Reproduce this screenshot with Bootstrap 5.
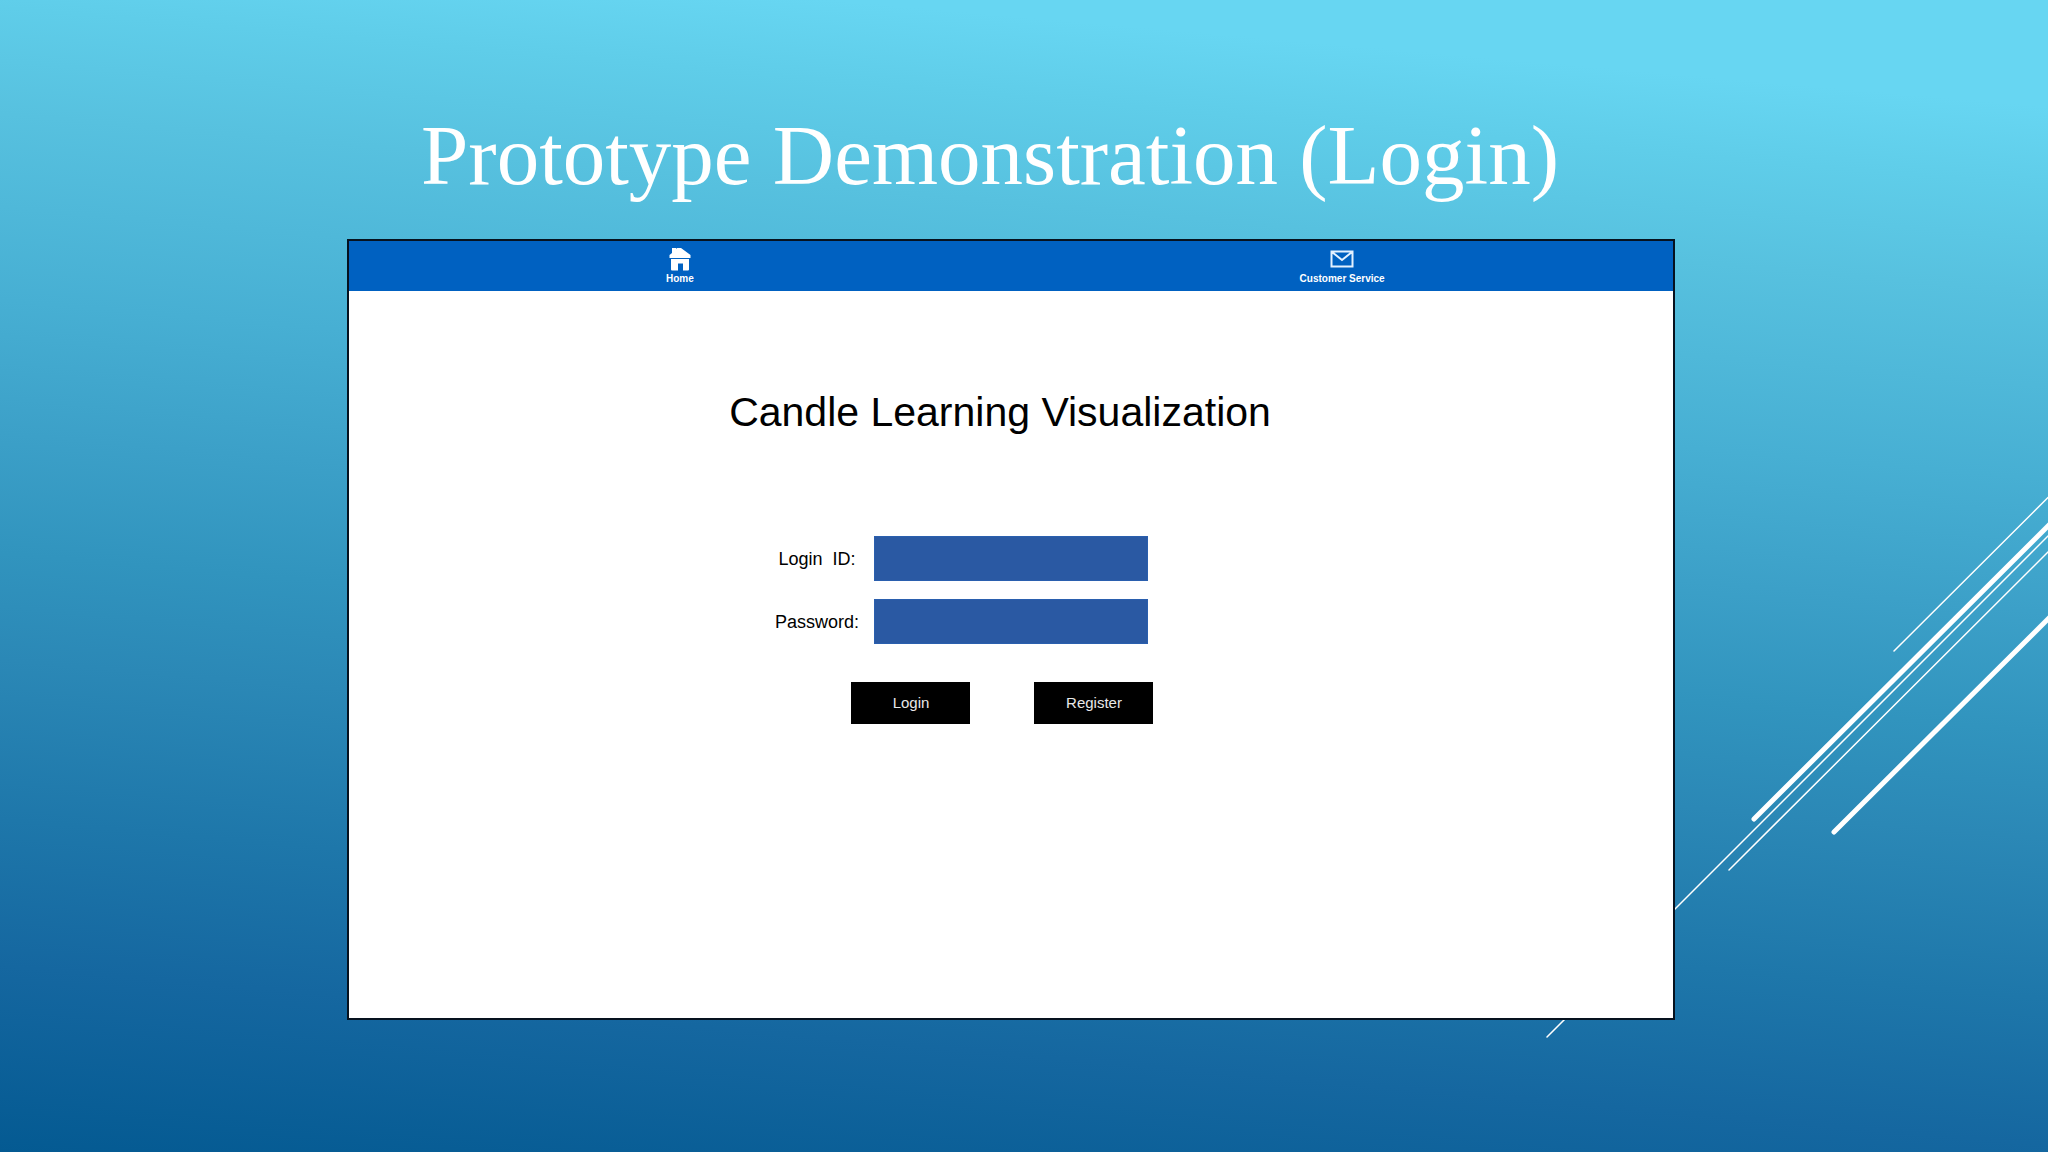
<!DOCTYPE html>
<html lang="en">
<head>
<meta charset="utf-8">
<meta name="viewport" content="width=device-width, initial-scale=1">
<title>Prototype Demonstration (Login)</title>
<link href="https://cdn.jsdelivr.net/npm/bootstrap@5.3.0/dist/css/bootstrap.min.css" rel="stylesheet">
<style>
  body {
    font-family: "Liberation Sans", Arial, sans-serif;
    color: #000;
    background: #2f8ebb;
  }
  .slide {
    min-height: 100vh;
    background: linear-gradient(185deg, #67d6f2 8%, #5fcde9 14%, #57c1df 22%, #47afd3 36%, #3ca0c8 46%, #3194be 55%, #2b88b6 63%, #1e77aa 75%, #1567a0 86%, #045a92 100%);
  }
  .streaks { stroke: #fff; stroke-linecap: round; z-index: 0; }
  .slide-body { padding: 105px 26px 0 0; z-index: 1; }
  .slide-title {
    font: 400 85px/100px "Liberation Serif", "Times New Roman", serif;
    padding-right: 42px;
    margin-bottom: 34px;
  }
  .prototype {
    width: 65.7%;
    min-height: 781px;
    border: 2px solid #06121f;
  }
  .topbar { background: #0061c1; height: 50px; }
  .topbar a { font-size: 10px; line-height: 12px; padding-top: 6px; }
  .topbar svg { display: block; margin: 0 auto 2px; }
  .app-title { font-size: 41px; line-height: 48px; margin: 97px 0 100px; padding-right: 22px; }
  .login-grid { row-gap: 18px; }
  .field-line { gap: 12px; padding-right: 102px; }
  .field-line label { width: 90px; font-size: 18px; line-height: 24px; white-space: pre; text-align: center; }
  .field-line input {
    width: 274px; height: 45px;
    background: #2a59a3; border: 1px solid #2a5fae; border-radius: 0; color: #fff;
  }
  .actions { gap: 64px; margin-top: 38px; padding-right: 17px; }
  .actions .btn { width: 119px; height: 42px; font-size: 15px; line-height: 20px; background: #000; color: #e8e8e8; border: 0; border-radius: 0; }
</style>
</head>
<body>
<main class="slide position-relative overflow-hidden">
  <svg class="streaks position-absolute top-0 start-0 w-100 h-100" viewBox="0 0 2048 1152" preserveAspectRatio="xMaxYMin slice" aria-hidden="true">
    <path stroke-width="1.5" d="M2050 495.500 1894 651M2050 534 1547 1037M2050 550 1729 870"/>
    <path stroke-width="5" d="M2052 522 1754 819M2052 615 1834 832"/>
  </svg>
  <div class="slide-body position-relative">
    <h1 class="slide-title text-white text-center">Prototype Demonstration (Login)</h1>
    <section class="prototype bg-white mx-auto" aria-label="Login prototype">
      <nav class="topbar d-flex text-center">
        <a href="#" class="flex-fill w-50 text-white fw-bold text-decoration-none">
          <svg width="22" height="24" viewBox="0 0 22 24" fill="#fff" aria-hidden="true"><path d="M3 1h4v1l1-1h4l9.500 7v3H.5V8L3 6zM2 12h18v10.500q0 1-1 1h-5v-7H9v7H3q-1 0-1-1z"/></svg>
          Home</a>
        <a href="#" class="flex-fill w-50 text-white fw-bold text-decoration-none">
          <svg width="24" height="24" viewBox="0 0 24 24" fill="none" stroke="#e4f1ff" stroke-width="2" aria-hidden="true"><path d="M1.500 4.500h21v15h-21zM2 5l10 8L22 5"/></svg>
          Customer Service</a>
      </nav>
      <h2 class="app-title text-center fw-normal">Candle Learning Visualization</h2>
      <form>
        <div class="login-grid d-flex flex-column align-items-center">
          <div class="field-line d-flex align-items-center">
            <label for="login-id">Login  ID:</label>
            <input id="login-id" type="text" autocomplete="username">
          </div>
          <div class="field-line d-flex align-items-center">
            <label for="password">Password:</label>
            <input id="password" type="password" autocomplete="current-password">
          </div>
        </div>
        <div class="actions d-flex justify-content-center">
          <button type="submit" class="btn">Login</button>
          <button type="button" class="btn">Register</button>
        </div>
      </form>
    </section>
  </div>
</main>
<script src="https://cdn.jsdelivr.net/npm/bootstrap@5.3.0/dist/js/bootstrap.bundle.min.js"></script>
</body>
</html>
